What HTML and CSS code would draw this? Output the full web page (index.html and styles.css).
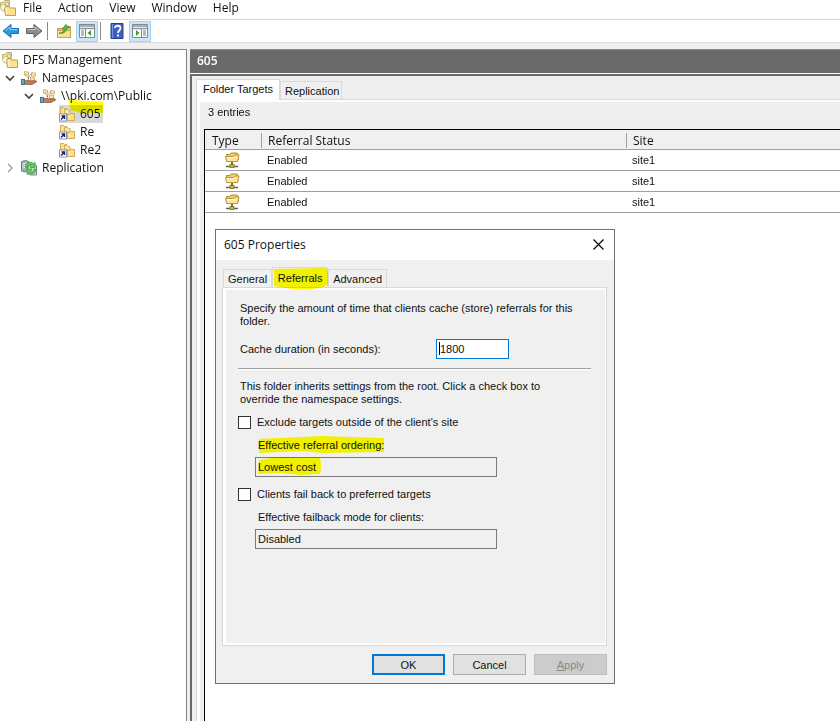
FILE: index.html
```html
<!DOCTYPE html>
<html lang="en">
<head>
<meta charset="utf-8">
<title>DFS Management</title>
<link rel="stylesheet" href="styles.css">
</head>
<body>
<svg class="defs" aria-hidden="true">
  <symbol id="dfs" viewBox="0 0 16 16">
    <path d="M.5 2.500h3l1-2h5v6h-9z" fill="#f6e7a4" stroke="#c4ae62"/>
    <path d="M.5 7l2-2.500h7v4l-4 3-4-1z" fill="#faf5dc" stroke="#c9bd96"/>
    <circle cx="7" cy="4" r="2" fill="#e4efcb" stroke="#a3b07f"/>
    <path d="M4.500 8.500l1-2h3.500l1 1.500h5.500v7.500H5.500z" fill="#fbe191" stroke="#c59f42"/>
    <path d="M6.500 8.500v6" stroke="#fff6cc"/>
  </symbol>
  <symbol id="ns" viewBox="0 0 16 16">
    <path d="M3.500 1.500h1.500l.5.500h2v3h-4zM10.500 2.500h1.500l.5.500h2v3h-4zM9.500 7h1.500l.5.500h2v3h-4z" fill="#fae3a4" stroke="#cba45a" stroke-width=".8"/>
    <path d="M5 5.500l2 2M9.500 4.500L7.500 7v3.500" fill="none" stroke="#333" stroke-dasharray="1 1"/>
    <rect x="0.500" y="9.500" width="3" height="5" fill="#6cabc8" stroke="#3d7894"/>
    <path d="M3.500 11l2.500-.8 4 .8 5-.3.500 1.300L11 14.500H5l-1.500-1z" fill="#c07a5a" stroke="#8b4e37" stroke-width=".7"/>
  </symbol>
  <symbol id="link" viewBox="0 0 16 16">
    <path d="M1.500 1.500h3l1 1h2v6h-6zM8.500 14.500V6.500h2.500l1 1h3.500v7z" fill="#f9df92" stroke="#d0ab58"/>
    <path d="M5.500 7.500V3.500h3l1 1h1.500v4z" fill="#fbe6a6" stroke="#d0ab58"/>
    <path d="M10.500 9v4.500" stroke="#fff3c6"/>
    <rect x=".5" y="8" width="7" height="7" fill="#fff" stroke="#8d98ad"/>
    <path d="M2 13.500l3-3M2.500 10h3v3" fill="none" stroke="#211c6e" stroke-width="1.400"/>
  </symbol>
  <symbol id="repl" viewBox="0 0 16 16">
    <path d="M.5 1.500l4-1 3 1v9l-4 1.500-3-1z" fill="#9fb0b6" stroke="#6d8187"/>
    <path d="M1.500 4l4-1M1.500 6l4-1M1.500 8l4-1" stroke="#e7edef"/>
    <path d="M9 4.500h5l1.500 1v9.500h-6l-3-1.500V8z" fill="#cdd7d9" stroke="#7b8b90"/>
    <path d="M4.500 7.500C4 3 9 .5 12.500 3.500L14 2V7.500H9L10.500 5.500C8.500 4 6.500 5.500 6.500 8z" fill="#5ccf55" stroke="#2c8f30" stroke-width=".6"/>
    <path d="M15 9c0 4.500-4.500 6.500-7.500 4L6 14.500V9h5L9.500 11c1.500 1.500 3.500.5 3.500-2z" fill="#5ccf55" stroke="#2c8f30" stroke-width=".6"/>
  </symbol>
  <symbol id="share" viewBox="0 0 16 16">
    <path d="M2.500 2.500h3.500l1-1.500h6l1 1.500v5.500h-11.500z" fill="#f0cf72" stroke="#b08c36"/>
    <path d="M2.500 9.500L1.500 4.500h8l1.500-1.500h4l-1.500 6.500z" fill="#fae6a0" stroke="#b7933c"/>
    <path d="M3 5.500h7" stroke="#fffbe0"/>
    <path d="M8 10v3" stroke="#806c20" stroke-width="2"/>
    <path d="M2 14.500h12" stroke="#56606a" stroke-width="1.500"/>
    <rect x="6" y="12.500" width="4" height="3" fill="#d4b522" stroke="#87741e" stroke-width=".8"/>
  </symbol>
  <symbol id="chev" viewBox="0 0 10 10"><path d="M1 3l4 4 4-4" fill="none" stroke="#404040" stroke-width="1.600"/></symbol>
  <symbol id="chev-r" viewBox="0 0 10 10"><path d="M3 1l4 4-4 4" fill="none" stroke="#a0a0a0" stroke-width="1.400"/></symbol>
  <symbol id="arrow" viewBox="0 0 18 16"><path d="M1 8l8-6.500v4h7.500v5H9v4z" stroke-linejoin="round"/><path d="M3.500 7.500L8 4v2.500h7.500" class="shine"/></symbol>
</svg>

<div class="app">
  <nav class="menubar">
    <svg class="icon"><use href="#dfs"/></svg>
    <button>File</button><button>Action</button><button>View</button><button>Window</button><button>Help</button>
  </nav>
  <div class="toolbar">
    <button class="tool" aria-label="Back"><svg class="arrow back"><use href="#arrow"/></svg></button>
    <button class="tool" aria-label="Forward"><svg class="arrow forward"><use href="#arrow"/></svg></button>
    <span class="divider"></span>
    <button class="tool" aria-label="Up one level">
      <svg class="icon" viewBox="0 0 16 16"><path d="M1.500 5.500h6l1-2h6v11h-13z" fill="#efcf73" stroke="#bd9642"/><path d="M1.500 7.500h13v7h-13z" fill="#fbe08d" stroke="#c9a454"/><path d="M3 10c4 0 5-2 5-4H6l4-4.500L13.500 5H11c-.5 4-4 6-8 5z" fill="#55bd3d" stroke="#348226" stroke-width=".7"/></svg>
    </button>
    <button class="tool on" aria-label="Show console tree">
      <svg class="icon" viewBox="0 0 16 16"><path d="M.5 1.500h15v13H.5z" fill="#fff" stroke="#7d8995"/><path d="M1 3h14M1 5.500h14" stroke="#8c969f" stroke-width="1.500"/><path d="M6.500 6v8" stroke="#7d8995"/><path d="M2 8h3M2 10h3M2 12h3" stroke="#5a7694"/><path d="M12 7v6L8.500 10z" fill="#35a52f"/></svg>
    </button>
    <span class="divider"></span>
    <button class="tool" aria-label="Help">
      <svg class="icon" viewBox="0 0 16 16"><path d="M2 .5h12v15H2z" fill="#3d5fc4" stroke="#263f92"/><path d="M3.500 1v14" stroke="#7b96e3"/><path d="M6 5c0-3 5.500-3 5.500 0C11.500 7.500 9 7.500 9 10M9 11.500v2" fill="none" stroke="#fff" stroke-width="1.800"/></svg>
    </button>
    <button class="tool on" aria-label="Show action pane">
      <svg class="icon" viewBox="0 0 16 16"><path d="M.5 1.500h15v13H.5z" fill="#fff" stroke="#7d8995"/><path d="M1 3h14M1 5.500h14" stroke="#8c969f" stroke-width="1.500"/><path d="M9.500 6v8" stroke="#7d8995"/><path d="M11 8h3M11 10h3M11 12h3" stroke="#5a7694"/><path d="M4 7v6l3.500-3z" fill="#35a52f"/></svg>
    </button>
  </div>

  <div class="panes">
    <aside class="tree">
      <ul>
        <li><div class="node"><svg class="icon"><use href="#dfs"/></svg><span>DFS Management</span></div>
          <ul>
            <li><div class="node"><svg class="chev"><use href="#chev"/></svg><svg class="icon"><use href="#ns"/></svg><span>Namespaces</span></div>
              <ul class="level">
                <li><div class="node"><svg class="chev"><use href="#chev"/></svg><svg class="icon"><use href="#ns"/></svg><span>\\pki.com\Public</span></div>
                  <ul class="level leaves">
                    <li><div class="node selected"><svg class="icon"><use href="#link"/></svg><span>605</span>
                      <svg class="mark mark-node" viewBox="0 0 34 15" preserveAspectRatio="none"><path d="M0 0l34 2v12H12L3 11z"/></svg></div></li>
                    <li><div class="node"><svg class="icon"><use href="#link"/></svg><span>Re</span></div></li>
                    <li><div class="node"><svg class="icon"><use href="#link"/></svg><span>Re2</span></div></li>
                  </ul>
                </li>
              </ul>
            </li>
            <li><div class="node"><svg class="chev"><use href="#chev-r"/></svg><svg class="icon"><use href="#repl"/></svg><span>Replication</span></div></li>
          </ul>
        </li>
      </ul>
    </aside>

    <main class="detail">
      <h1>605</h1>
      <div class="detail-body">
        <div class="tabs">
          <button class="tab active">Folder Targets</button><button class="tab">Replication</button>
        </div>
        <section class="page">
          <p class="count">3 entries</p>
          <div class="list">
            <table>
              <thead><tr><th class="c-type">Type</th><th class="c-status">Referral Status</th><th>Site</th></tr></thead>
              <tbody>
                <tr><td><svg class="icon"><use href="#share"/></svg></td><td>Enabled</td><td>site1</td></tr>
                <tr><td><svg class="icon"><use href="#share"/></svg></td><td>Enabled</td><td>site1</td></tr>
                <tr><td><svg class="icon"><use href="#share"/></svg></td><td>Enabled</td><td>site1</td></tr>
              </tbody>
            </table>
          </div>
        </section>
      </div>
    </main>
  </div>
</div>

<div class="dialog" role="dialog" aria-labelledby="dlg-title">
  <header>
    <h2 id="dlg-title">605 Properties</h2>
    <button class="close" aria-label="Close"><svg viewBox="0 0 11 11"><path d="M.5.5l10 10M10.500.5l-10 10" stroke="#000" stroke-width="1.200"/></svg></button>
  </header>
  <div class="dialog-body">
    <div class="tabs">
      <button class="tab">General</button><button class="tab active">Referrals<svg class="mark mark-tab" viewBox="0 0 56 22" preserveAspectRatio="none"><path d="M1 1l50-1q4 0 4 4v12l-4 3q-22 5-38 1L1 18z"/></svg></button><button class="tab">Advanced</button>
    </div>
    <form class="sheet">
      <p>Specify the amount of time that clients cache (store) referrals for this folder.</p>
      <div class="duration">
        <label for="cache">Cache duration (in seconds):</label>
        <span class="entry"><input id="cache" type="text" value="1800"></span>
      </div>
      <hr>
      <p>This folder inherits settings from the root. Click a check box to override the namespace settings.</p>
      <label class="check"><input type="checkbox">Exclude targets outside of the client's site</label>
      <div class="effective">
        <label for="order"><span class="marked">Effective referral ordering:<svg class="mark mark-label" viewBox="0 0 122 18" preserveAspectRatio="none"><path d="M1 3l20-1 40-2 61 2v14l-60 1-20-2-41 2z"/></svg></span></label>
        <span class="field"><input id="order" type="text" value="Lowest cost" readonly><svg class="mark mark-field" viewBox="0 0 64 20" preserveAspectRatio="none"><path d="M1 4l20-3 41 1q2 8 0 17l-20 1-20-2-22 1z"/></svg></span>
      </div>
      <label class="check">
        <input type="checkbox">Clients fail back to preferred targets</label>
      <div class="effective">
        <label for="mode">Effective failback mode for clients:</label>
        <span class="field"><input id="mode" type="text" value="Disabled" readonly></span>
      </div>
    </form>
    <footer>
      <button class="btn default">OK</button><button class="btn">Cancel</button><button class="btn" disabled><u>A</u>pply</button>
    </footer>
  </div>
</div>
</body>
</html>
```
FILE: styles.css
```css
* { box-sizing: border-box; }

body {
  margin: 0;
  background: #efefef;
  color: #111;
  font: 12px/18px "Open Sans", "Noto Sans", sans-serif;
}

button, input { font: inherit; color: inherit; }
ul { list-style: none; margin: 0; padding: 0; }
p, h1, h2 { margin: 0; font-size: inherit; }
svg { display: block; flex: none; }
.defs { position: absolute; width: 0; height: 0; }
.icon { width: 16px; height: 16px; }

.app { display: flex; flex-direction: column; min-height: 100vh; }

.menubar {
  display: flex;
  align-items: center;
  height: 20px;
  padding-bottom: 3px;
  background: #fff;
  border-bottom: 1px solid #d5d5d5;
}
.menubar button { border: 0; background: none; padding: 0 8px; line-height: 16px; }
.menubar .icon { margin-right: -1px; }

.toolbar {
  display: flex;
  align-items: center;
  height: 23px;
  background: #fff;
  border-bottom: 1px solid #dcdcdc;
}
.tool {
  display: flex;
  align-items: center;
  justify-content: center;
  width: 22px;
  height: 21px;
  padding: 0;
  border: 1px solid transparent;
  background: none;
}
.tool.on { background: #cde6f9; border-color: #a3d0f3; }
.arrow { width: 18px; height: 16px; }
.back { fill: #2b9be0; stroke: #1c6ca8; }
.forward { fill: #8d8d8d; stroke: #5d5d5d; transform: scaleX(-1); }
.shine { fill: none; stroke: #fff; stroke-opacity: .5; }
.divider { width: 1px; height: 18px; margin: 0 5px 0 2px; background: #8a8a8a; }
.tool + .tool { margin-left: 1px; }

.panes { flex: 1; display: grid; grid-template-columns: 187px 1fr; gap: 3px; margin-top: 6px; }

.tree {
  background: #fff;
  border: solid #828282;
  border-width: 1px 1px 0 0;
  padding: 1px 0 0 2px;
}
.node { display: flex; align-items: center; width: max-content; height: 18px; gap: 5px; position: relative; }
.chev { width: 10px; height: 10px; margin: 0 1px 0 3px; }
.level { padding-left: 19px; }
.leaves { padding-left: 38px; }
.selected { background: #d9d9d9; padding-right: 2px; }

.detail { display: flex; flex-direction: column; min-width: 0; }
h1 {
  height: 24px;
  padding-left: 7px;
  border-top: 1px solid #8b8b8b;
  background: #696969;
  color: #fff;
  line-height: 22px;
  font-weight: 600;
}
.detail-body {
  flex: 1;
  display: flex;
  flex-direction: column;
  padding: 3px 0 0 4px;
  border: solid #696969;
  border-width: 2px 0 0 2px;
  box-shadow: 0 -1px #fff;
  margin-top: 1px;
}

.tabs { display: flex; align-items: flex-end; position: relative; }
.tab {
  height: 18px;
  padding: 0 4px;
  border: 1px solid #d9d9d9;
  border-bottom: 0;
  background: #f0f0f0;
  white-space: nowrap;
  position: relative;
}
.tab, .count, td, .btn, .dialog-body { font: 11px/16px "Liberation Sans", Arial, sans-serif; }
.detail .tabs { height: 20px; }
.detail .tab { width: 62px; }
.detail .tab.active { height: 21px; width: 84px; padding-bottom: 2px; margin-bottom: -1px; z-index: 1; background: #fff; }
.page {
  flex: 1;
  display: flex;
  flex-direction: column;
  border: solid #d9d9d9;
  border-width: 1px 0 0 1px;
  box-shadow: inset 3px 2px #fff;
  padding: 4px 0 0 7px;
}
.count { padding-left: 4px; height: 25px; }
.list { flex: 1; background: #fff; border: solid #000; border-width: 1px 0 0 1px; }
table { width: 100%; border-collapse: separate; border-spacing: 0; table-layout: fixed; }
th {
  height: 20px;
  padding: 2px 6px 0 7px;
  background: #f0f0f0;
  border-bottom: 1px solid #a0a0a0;
  text-align: left;
  font-weight: 400;
  line-height: 17px;
  background-image: linear-gradient(#a0a0a0, #a0a0a0);
  background-size: 1px 15px;
  background-position: 0 3px;
  background-repeat: no-repeat;
}
th.c-type { width: 56px; background-image: none; }
th.c-status { width: 365px; }
td { height: 21px; padding: 2px 6px; border-bottom: 1px solid #a0a0a0; }
td .icon { margin: 0 0 0 13px; }

.dialog {
  position: absolute;
  left: 215px;
  top: 229px;
  width: 400px;
  border: 1px solid #6f6f6f;
  background: #f0f0f0;
}
.dialog header {
  display: flex;
  align-items: center;
  justify-content: space-between;
  height: 30px;
  padding: 0 10px 0 8px;
  background: #fff;
}
h2 { font-weight: 400; }
.close { border: 0; padding: 0 0 2px; background: none; }
.close svg { width: 11px; height: 11px; }
.dialog-body { padding: 7px 7px 8px 6px; line-height: 13px; }
.dialog .tabs { height: 20px; padding-left: 1px; }
.dialog .tab.active { height: 20px; line-height: 18px; width: 56px; padding: 0; }

.sheet {
  display: block;
  height: 359px;
  padding: 14px 15px;
  border: 1px solid #d9d9d9;
  box-shadow: inset 3px 2px #fff, inset -1px -2px #fff;
}
.sheet p { padding: 0 12px 0 2px; }
.duration { display: flex; align-items: center; gap: 8px; margin-top: 11px; padding-left: 2px; }
.duration label { width: 188px; }
.entry { position: relative; }
.entry input {
  display: block;
  width: 73px;
  height: 20px;
  padding: 0 3px;
  border: 1px solid #0078d7;
  background: #fff;
  outline: 0;
}
.entry::after { content: ""; position: absolute; left: 3px; top: 3px; width: 1px; height: 13px; background: #000; }
hr { margin: 9px 0 11px; border: 0; height: 1px; background: #a0a0a0; box-shadow: 0 1px #fff; }
.check { display: flex; align-items: center; gap: 6px; margin-top: 10px; height: 13px; }
.check input { appearance: none; width: 13px; height: 13px; margin: 0; border: 1px solid #333; background: #fff; }
.effective { display: flex; flex-direction: column; align-items: flex-start; gap: 5px; padding: 10px 0 1px 17px; }
.effective label { padding-left: 3px; }
.field, .marked { position: relative; }
.field input {
  display: block;
  width: 242px;
  height: 20px;
  padding: 0 2px;
  border: 1px solid #7a7a7a;
  background: #f0f0f0;
  outline: 0;
}

.dialog footer { display: flex; justify-content: flex-end; gap: 8px; margin: 8px 0 0; }
.btn {
  width: 73px;
  height: 21px;
  padding: 0;
  border: 1px solid #adadad;
  background: #e1e1e1;
}
.btn.default { border: 2px solid #0078d7; }
.btn:disabled { background: #ccc; border-color: #bfbfbf; color: #888; }

.mark { position: absolute; fill: #ff0; mix-blend-mode: multiply; pointer-events: none; }
.mark-node { left: 9px; top: -5px; width: 35px; height: 14px; }
.mark-tab { left: 0; top: 0; width: 56px; height: 22px; }
.mark-label { left: 0; top: -3px; width: 126px; height: 18px; }
.mark-field { left: 3px; top: -1px; width: 64px; height: 19px; }
```
